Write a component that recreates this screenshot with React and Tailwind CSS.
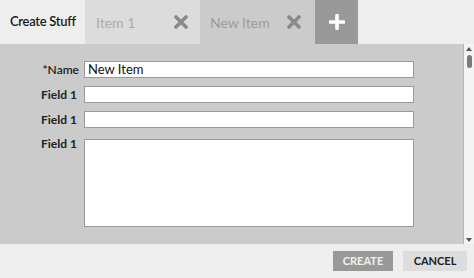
import React from "react";

const XIcon = () => (
  <svg width="14" height="14" viewBox="0 0 14 14">
    <path d="M2 2 L12 12 M12 2 L2 12" stroke="#8a8a8a" strokeWidth="3.6" strokeLinecap="round" />
  </svg>
);

const PlusIcon = () => (
  <svg width="16" height="16" viewBox="0 0 16 16">
    <path d="M8 1.5 V14.5 M1.5 8 H14.5" stroke="#ffffff" strokeWidth="3.6" strokeLinecap="round" />
  </svg>
);

export default function App() {
  const font = { fontFamily: 'Lato, "Open Sans", sans-serif' };
  return (
    <div className="w-[474px] h-[278px] flex flex-col bg-[#eeeeee] overflow-hidden" style={font}>
      <div className="h-[44px] flex shrink-0 bg-[#eeeeee]">
        <div className="w-[85px] flex items-center pl-[10px] text-[13px] font-semibold text-[#1a1a1a] bg-[#eeeeee] tracking-[-0.3px]">
          Create Stuff
        </div>
        <div className="w-[115px] flex items-center justify-between pl-[11px] pr-[12px] bg-[#dcdcdc] text-[14px] text-[#ababab]">
          <span>Item 1</span>
          <XIcon />
        </div>
        <div className="w-[115px] flex items-center justify-between pl-[10px] pr-[14px] bg-[#cbcbcb] text-[14px] text-[#9c9c9c]">
          <span>New Item</span>
          <XIcon />
        </div>
        <div className="w-[43px] flex items-center justify-center bg-[#999999]">
          <PlusIcon />
        </div>
        <div className="flex-1 bg-[#eeeeee]" />
      </div>
      <div className="h-[200px] flex shrink-0 bg-[#cbcbcb]">
        <div className="flex-1 pt-[17px]">
          <div className="grid grid-cols-[79px_330px] gap-x-[5px] gap-y-[8px]">
            <div className="text-[12px] font-semibold text-[#222] text-right leading-[17px]">*Name</div>
            <div className="h-[17px] bg-white border border-[#9a9a9a] px-[3px] text-[13px] leading-[15px] text-[#111]">New Item</div>
            <div className="text-[12px] font-bold text-[#222] leading-[17px] pl-[41px] whitespace-nowrap">Field 1</div>
            <div className="h-[17px] bg-white border border-[#9a9a9a]" />
            <div className="text-[12px] font-bold text-[#222] leading-[17px] pl-[41px] whitespace-nowrap">Field 1</div>
            <div className="h-[17px] bg-white border border-[#9a9a9a]" />
            <div className="text-[12px] font-bold text-[#222] leading-[17px] pl-[41px] whitespace-nowrap mt-[-1px]">Field 1</div>
            <div className="h-[88px] mt-[3px] bg-white border border-[#9a9a9a]" />
          </div>
        </div>
        <div className="w-[11px] flex flex-col items-center bg-[#f4f4f4] border-l border-[#b5b5b5]">
          <svg width="6" height="4" viewBox="0 0 6 4" className="mt-[3px]">
            <path d="M0 4 L3 0 L6 4 Z" fill="#555" />
          </svg>
          <div className="w-[5px] h-[13px] mt-[4px] rounded-[3px] bg-[#7a7a7a]" />
          <div className="flex-1" />
          <svg width="6" height="4" viewBox="0 0 6 4" className="mb-[2px]">
            <path d="M0 0 L6 0 L3 4 Z" fill="#555" />
          </svg>
        </div>
      </div>
      <div className="flex-1 flex items-start justify-end pt-[7px] pr-[7px] gap-[10px] bg-[#eeeeee]">
        <div className="w-[60px] h-[20px] flex items-center justify-center bg-[#999999] text-[11px] font-bold text-[#f0f0f0]">
          CREATE
        </div>
        <div className="w-[64px] h-[20px] flex items-center justify-center bg-[#dddddd] text-[11px] font-bold text-[#222]">
          CANCEL
        </div>
      </div>
    </div>
  );
}
